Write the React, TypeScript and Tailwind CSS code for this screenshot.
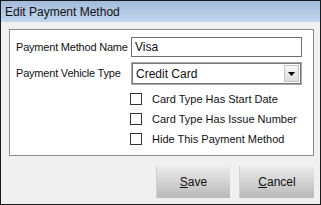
import React from "react";

const CHECKS = [
  "Card Type Has Start Date",
  "Card Type Has Issue Number",
  "Hide This Payment Method",
];

export default function App() {
  return (
    <div
      className="w-[321px] h-[205px] flex flex-col border border-[#1a1a1a] bg-[#f0f0f0] text-[#111] overflow-hidden"
      style={{ fontFamily: '"Liberation Sans", Arial, sans-serif' }}
    >
      {/* Title bar */}
      <div className="h-[21px] shrink-0 flex items-center pl-[4px] bg-gradient-to-b from-[#a3bbdb] to-[#c3d6ee] text-[12px] whitespace-nowrap">
        Edit Payment Method
      </div>

      {/* Body */}
      <div className="flex flex-col pt-[7px] pl-[8px] pr-[6px]">
        <div className="h-[127px] border border-[#8a8a8a] bg-white flex flex-col pl-[6px] pr-[11px] pt-[7px] text-[11px] whitespace-nowrap">
          <div className="flex items-center h-[20px]">
            <span className="w-[115px] shrink-0 tracking-[-0.2px]">Payment Method Name</span>
            <div className="flex-1 h-[20px] border border-[#6e6e6e] flex items-center pl-[3px] text-[12px]">Visa</div>
          </div>

          <div className="flex items-center h-[23px] mt-[5px]">
            <span className="w-[115px] shrink-0 tracking-[-0.2px]">Payment Vehicle Type</span>
            <div className="flex-1 h-[23px] border border-[#a8a8a8] flex items-center text-[12px]">
              <div className="flex-1 h-full border border-[#777] border-r-0 flex items-center pl-[3px]">
                Credit Card
              </div>
              <div className="w-[17px] h-full border border-[#777] border-l-0 flex items-center justify-center pr-[1px]">
                <div className="w-[15px] h-[17px] bg-gradient-to-b from-[#f6f6f6] to-[#dedede] border border-[#c4c4c4] flex items-center justify-center">
                  <svg width="7" height="4" viewBox="0 0 7 4">
                    <path d="M0 0h7L3.5 4z" fill="#000" />
                  </svg>
                </div>
              </div>
            </div>
          </div>

          <div className="flex flex-col mt-[4px] pl-[114px]">
            {CHECKS.map((c) => (
              <div key={c} className="flex items-center h-[20px]">
                <div className="w-[12px] h-[12px] shrink-0 border border-[#333] bg-white" />
                <span className="ml-[10px]">{c}</span>
              </div>
            ))}
          </div>
        </div>

        {/* Buttons */}
        <div className="flex justify-end gap-[9px] mt-[10px] text-[12px]">
          <button className="w-[74px] h-[32px] bg-gradient-to-b from-[#ececec] to-[#b9b9b9] border-l border-[#d0d0d0]">
            <span className="underline">S</span>ave
          </button>
          <button className="w-[75px] h-[32px] bg-gradient-to-b from-[#ececec] to-[#b9b9b9] border-l border-[#d0d0d0]">
            <span className="underline">C</span>ancel
          </button>
        </div>
      </div>
    </div>
  );
}
